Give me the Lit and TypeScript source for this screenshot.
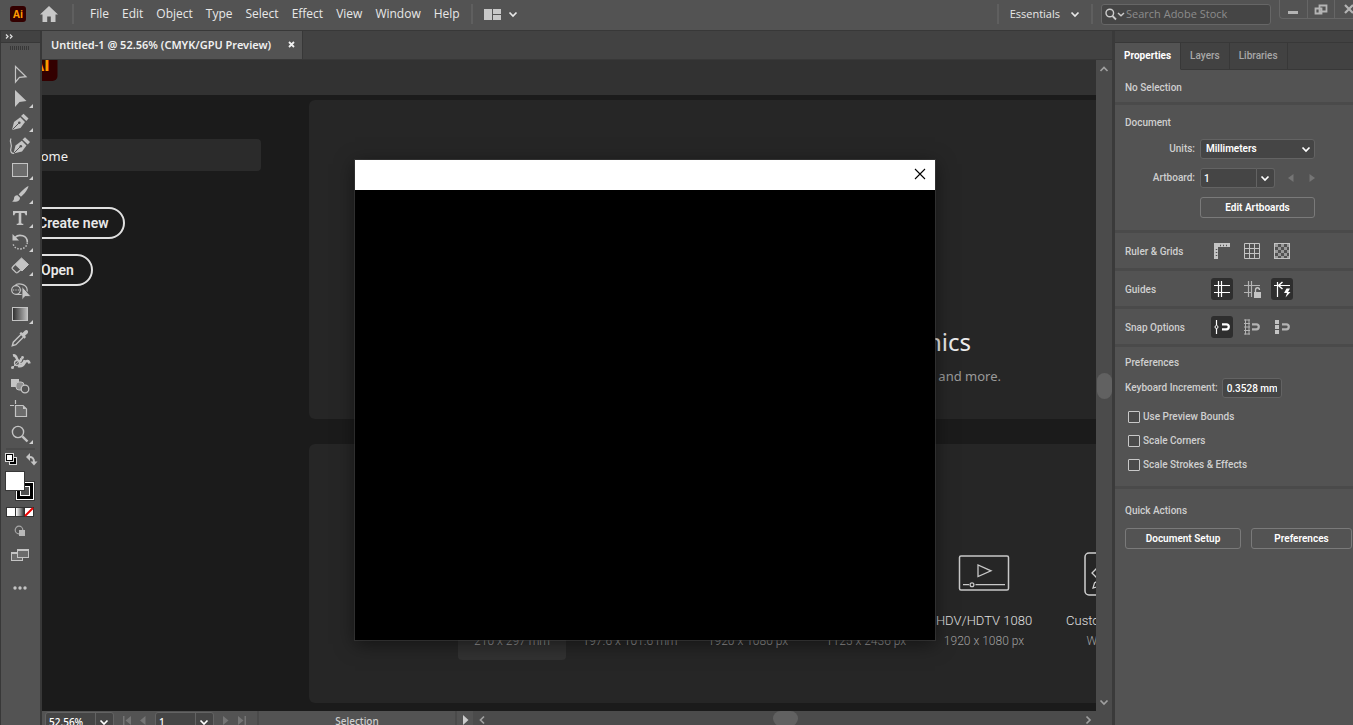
import { LitElement, html, css, svg, nothing } from "lit";
import { customElement } from "lit/decorators.js";
import { classMap } from "lit/directives/class-map.js";

const C = "#c4c4c4";
const BG = "#535353";

const chevron = (dir: "down" | "up" | "left" | "right" = "down") => {
  const d = {
    down: "M1.5 3.5 5 7l3.5-3.5",
    up: "M1.5 7 5 3.5 8.500 7",
    left: "M7 1.500 3.500 5 7 8.500",
    right: "M3.500 1.500 7 5 3.500 8.500",
  }[dir];
  return html`<svg class="chev" width="10" height="10" viewBox="0 0 10 10" aria-hidden="true">
    <path d=${d} fill="none" stroke="currentColor" stroke-width="1.7" />
  </svg>`;
};

const nib = svg`
  <path d="M4 20 6 12 12.300 7.300 17 12 12.500 18 4 20z" fill=${C} />
  <path d="M4.500 19.500 10.800 13.200" stroke=${BG} stroke-width="1" />
  <circle cx="11.300" cy="12.700" r="1.300" fill=${BG} />
  <path d="M13 6 15.500 3.800 20.500 8.600 18.300 11z" fill=${C} />`;

const tools: { name: string; more?: boolean; art: unknown }[] = [
  { name: "Selection", art: svg`<path d="M7.500 4.500V20l4-4.700 6.500-.6z" fill="none" stroke=${C} stroke-width="1.200" />` },
  { name: "Direct Selection", more: true, art: svg`<path d="M7 4v17l4.500-5 7-1z" fill=${C} />` },
  { name: "Pen", more: true, art: nib },
  {
    name: "Curvature",
    art: svg`<g transform="translate(1.500 -.5)">${nib}</g>
      <path d="M3 4.500C1 8 4.500 10 3 14c-1 3 0 5.500 3 5.500" fill="none" stroke=${C} stroke-width="1.200" />`,
  },
  { name: "Rectangle", more: true, art: svg`<rect x="4.500" y="5.500" width="15" height="13" fill="#6c6c6c" stroke=${C} />` },
  {
    name: "Paintbrush", more: true,
    art: svg`<path d="M20.500 4c-2.500.8-7.500 5.500-9.800 8.500l2.200 2.200C16 12.500 20 7.500 20.500 4z" fill=${C} />
      <path d="M9.800 13.400c-2.600-.3-3.600 1.200-3.800 3-.1 1.400-.8 2.400-2 3 3.800 1 8 .4 8-3.600z" fill=${C} />`,
  },
  { name: "Type", more: true, art: svg`<path d="M5 5h14v4.300h-1.500c-.2-1.700-.8-2.300-2.500-2.300h-1.700v9.500c0 1 .4 1.200 2 1.300V19H8.700v-1.200c1.600-.1 2-.3 2-1.300V7H9C7.300 7 6.700 7.600 6.500 9.300H5z" fill=${C} />` },
  {
    name: "Rotate", more: true,
    art: svg`<path d="M7 7.500c4-4 12.500-2 12.300 4.800" fill="none" stroke=${C} stroke-width="1.600" />
      <path d="M19.300 12.500c-.3 8-13.500 9-14.300.5" fill="none" stroke=${C} stroke-width="1.400" stroke-dasharray="1.500 1.500" />
      <path d="M4.500 4v6.500H11z" fill=${C} />`,
  },
  {
    name: "Eraser", more: true,
    art: svg`<path d="M13.500 4 20.500 10.500 14 17 7 10.300z" fill=${C} stroke=${C} />
      <path d="M7 10.500 4.300 13.500q-.6.8.2 1.600l3.500 3.400q.8.6 1.600 0l4-3.400" fill="none" stroke=${C} stroke-width="1.300" />`,
  },
  {
    name: "Shape Builder",
    art: svg`<circle cx="8" cy="12" r="4.300" fill="none" stroke=${C} stroke-width="1.200" />
      <path d="M7 7.500c2-2.500 10-2 11.800 2.500 .6 1.500.4 3 0 4M8 16.500h6" fill="none" stroke=${C} stroke-width="1.200" />
      <path d="M5 12h9" stroke=${C} stroke-width="1.200" stroke-dasharray="1.200 1.200" />
      <path d="M14 8.500V22l3-3.500h6z" fill=${C} stroke=${BG} stroke-width=".8" />`,
  },
  {
    name: "Gradient", more: true,
    art: svg`<defs><linearGradient id="g"><stop offset="0" stop-color="#2c2c2c" /><stop offset="1" stop-color="#c0c0c0" /></linearGradient></defs>
      <rect x="4.500" y="5.500" width="15" height="13" fill="url(#g)" stroke=${C} />`,
  },
  {
    name: "Eyedropper",
    art: svg`<path d="M13 8.500 5.300 16.200l-1 3.500 3.500-1L15.500 11" fill="none" stroke=${C} stroke-width="1.400" />
      <path d="M11.500 7.500 13 6l1.500 1L17 4.500c2-1.500 4 .5 2.700 2.700L17 9.700l1 1.300-1.500 1.700z" fill=${C} />`,
  },
  {
    name: "Puppet Warp",
    art: svg`<path d="M5 5.500c4-1 3 4 5.500 5.500 2.500 1 2-1 3-2.500" fill="none" stroke=${C} stroke-width="2.600" />
      <path d="M10 16c2.500.5 5 0 6.500-3s4.500-2.500 5 .5" fill="none" stroke=${C} stroke-width="2.600" />
      <path d="M11 13.500c3 1 5-1 5.500-3.500" fill="none" stroke=${C} stroke-width="2" />
      <circle cx="9" cy="13" r="2.500" fill=${BG} stroke=${C} stroke-width="1.300" />
      <path d="M4.500 17.500 15 7.500" stroke=${C} /><circle cx="4.500" cy="17.500" r="1.500" fill=${C} /><circle cx="14.500" cy="7.500" r="1.400" fill=${C} />`,
  },
  {
    name: "Blend",
    art: svg`<rect x="3" y="5" width="8" height="8" fill=${C} />
      <rect x="8" y="8" width="8" height="8" rx="3" fill="#8f8f8f" stroke=${C} />
      <circle cx="17" cy="15" r="3.800" fill=${BG} stroke=${C} stroke-width="1.300" />`,
  },
  {
    name: "Artboard",
    art: svg`<path d="M7.500 7.500H15l3.500 3.500v7.500h-11z" fill="#6c6c6c" stroke=${C} stroke-width="1.200" />
      <path d="M15 7.500 18.500 11H15z" fill=${C} /><path d="M2 7.500h4M7.500 2v4" stroke=${C} stroke-width="1.200" />`,
  },
  {
    name: "Zoom", more: true,
    art: svg`<circle cx="10" cy="10" r="5.600" fill="none" stroke=${C} stroke-width="1.400" />
      <path d="M14.300 14.300 19.500 19.500" stroke=${C} stroke-width="2.400" />`,
  },
];

@customElement("tool-rail")
class ToolRail extends LitElement {
  static styles = css`
    :host { display: flex; flex-direction: column; background: #535353; border-left: 1px solid #383838; border-right: 2px solid #383838; box-sizing: border-box; }
    .top { height: 11px; background: #424242; border-bottom: 1px solid #383838; padding-left: 4px; }
    .top svg, .grip { display: block; }
    .grip { height: 4px; margin: 3px 10px 12px 9px; background: repeating-linear-gradient(90deg, #383838 0 1px, #535353 1px 2px); }
    button { display: block; padding: 0; border: 0; background: none; }
    svg { display: block; }
    .tool { height: 24px; padding-left: 5px; }
    .rule { height: 2px; margin: 2px 5px 3px; background: #4a4a4a; }
    .swap { display: flex; justify-content: space-between; padding: 0 2px 0 4px; }
    .swatch { padding: 5px 0 0 4px; }
    .strip { padding: 5px 0 0 5px; }
    .mode { padding: 8px 0 0 9px; }
  `;
  render() {
    return html`
      <div class="top"><svg width="9" height="11" viewBox="0 0 9 11"><path d="M1 3.500 3 5.500 1 7.500M5 3.500l2 2-2 2" fill="none" stroke="#ddd" stroke-width="1.300" /></svg></div>
      <div class="grip"></div>
      ${tools.map((t) => html`
        <button class="tool" title=${t.name} aria-label=${t.name}>
          <svg width="28" height="24" viewBox="-2 0 28 24">${t.art}
            ${t.more ? svg`<path d="M25 18v4h-4z" fill="#d0d0d0" />` : nothing}
          </svg>
        </button>`)}
      <div class="rule"></div>
      <div class="swap">
        <button aria-label="Default Fill and Stroke"><svg width="13" height="13" viewBox="0 0 13 13">
          <rect x="4.500" y="4.500" width="7" height="7" fill="#000" stroke="#ddd" /><rect x="6.500" y="6.500" width="3" height="3" fill="#535353" stroke="#000" />
          <rect x="0" y="0" width="9" height="9" fill="#ddd" /><rect x="1.500" y="1.500" width="6" height="6" fill="#fff" stroke="#000" /></svg></button>
        <button aria-label="Swap Fill and Stroke"><svg width="13" height="13" viewBox="0 0 13 13">
          <path d="M4 4c3.500-.3 5 1.500 5 5" fill="none" stroke=${C} stroke-width="2" /><path d="M5 0v8L1 4zM5.500 8.500h7L9 12.500z" fill=${C} /></svg></button>
      </div>
      <button class="swatch" aria-label="Fill and Stroke"><svg width="31" height="31" viewBox="0 0 31 31">
        <rect x="10.500" y="10.500" width="19" height="19" fill="#fff" stroke="#383838" /><rect x="12" y="12" width="16" height="16" fill="#000" />
        <rect x="15.500" y="15.500" width="9" height="9" fill="#535353" stroke="#fff" />
        <rect x=".5" y=".5" width="19" height="19" fill="#fff" stroke="#383838" /></svg></button>
      <button class="strip" aria-label="Color, Gradient, None"><svg width="28" height="10" viewBox="0 0 28 10">
        <defs><linearGradient id="s"><stop offset="0" stop-color="#fff" /><stop offset="1" stop-color="#333" /></linearGradient></defs>
        <rect width="28" height="10" fill="#333" /><rect x="1" y="1" width="8" height="8" fill="#fff" /><rect x="10" y="1" width="8" height="8" fill="url(#s)" />
        <rect x="19" y="1" width="8" height="8" fill="#fff" /><path d="M19 9 27 1" stroke="#e00" stroke-width="2" /></svg></button>
      <button class="mode" aria-label="Drawing Mode"><svg width="20" height="12" viewBox="0 0 20 12">
        <circle cx="9" cy="5" r="3.800" fill="none" stroke="#a8a8a8" stroke-width="1.200" /><rect x="9" y="5" width="6" height="6" fill="#b8b8b8" /></svg></button>
      <button class="mode" aria-label="Screen Mode"><svg width="20" height="20" viewBox="0 0 20 20">
        <rect x="1.500" y="7.500" width="11" height="8" fill="#6c6c6c" stroke=${C} /><path d="M1.500 8.500h6" stroke=${C} />
        <rect x="7.500" y="4.500" width="11" height="8" fill="#6c6c6c" stroke=${C} /><path d="M7.500 5.500h11" stroke=${C} /></svg></button>
      <button class="mode" aria-label="Edit Toolbar"><svg width="20" height="28" viewBox="0 0 20 28">
        <g fill=${C}><circle cx="5" cy="15" r="1.700" /><circle cx="10" cy="15" r="1.700" /><circle cx="15" cy="15" r="1.700" /></g></svg></button>
    `;
  }
}

const presets = [
  ["A4", "210 x 297 mm"],
  ["Postcard", "197.6 x 101.6 mm"],
  ["Common", "1920 x 1080 px"],
  ["iPhone X", "1125 x 2436 px"],
  ["HDV/HDTV 1080", "1920 x 1080 px"],
  ["Custom Size", "W x H"],
];

@customElement("home-screen")
class HomeScreen extends LitElement {
  static styles = css`
    :host { display: block; overflow: hidden; background: #1b1b1b; font-family: "Noto Sans", sans-serif; color: #e6e6e6; }
    .sheet { display: flex; flex-direction: column; margin-left: -42px; height: 100%; }
    .brand { flex: none; height: 35px; background: #323232; padding-left: 26px; overflow: hidden; }
    .logo { width: 32px; height: 21px; display: block; }
    .cols { flex: 1; min-height: 0; display: grid; grid-template-columns: 309px 1fr; }
    nav { display: flex; flex-direction: column; align-items: flex-start; padding: 44px 48px 0 22px; }
    .home { align-self: stretch; height: 32px; display: flex; align-items: center; padding-left: 9px; border-radius: 4px; background: #2b2b2b; color: #f0f0f0; font-size: 13px; text-decoration: none; margin-bottom: 36px; box-sizing: border-box; padding-top: 2px; }
    .pill { height: 32px; min-width: 71px; box-sizing: border-box; border: 2px solid #e0e0e0; border-radius: 16px; background: none; color: #e8e8e8; font: 600 14px "Roboto", sans-serif; padding: 0 14px; margin-bottom: 15px; }
    main { display: grid; grid-template-rows: 319px 259px; row-gap: 25px; padding-top: 5px; min-width: 0; }
    .card { background: #262626; border-radius: 6px 0 0 6px; overflow: hidden; }
    .hero { display: flex; flex-direction: column; justify-content: flex-end; align-items: flex-end; padding: 0 95px 32px 0; }
    h1 { margin: 0 30px 7px 0; font-size: 24px; line-height: 32px; font-weight: 400; color: #ececec; }
    p { margin: 0; font-size: 13px; line-height: 22px; color: #9a9a9a; }
    .row { display: flex; gap: 10px; padding: 96px 0 0 149px; }
    .tile { flex: none; width: 108px; height: 120px; box-sizing: border-box; padding: 0; border: 0; border-radius: 4px; background: none; display: flex; flex-direction: column; align-items: center; color: #e0e0e0; font: 300 13px/20px "Roboto", sans-serif; white-space: nowrap; }
    .tile.on { background: #323232; }
    .art { height: 68px; margin-bottom: 3px; display: flex; align-items: center; }
    .dim { color: #a0a0a0; font-size: 12px; }
  `;
  art(i: number) {
    if (i === 4)
      return svg`<svg width="52" height="44" viewBox="0 0 52 44"><g fill="none" stroke="#c8c8c8" stroke-width="1.300">
        <rect x="1.500" y="4" width="49" height="34" rx="1.500" stroke-width="1.500" /><path d="M20 13v11.500l13-5.700z" />
        <path d="M5 32.700h6M17.500 32.700H47" /><circle cx="14" cy="32.700" r="1.900" /></g></svg>`;
    if (i === 5)
      return svg`<svg width="36" height="48" viewBox="0 0 36 48"><g fill="none" stroke="#d0d0d0" stroke-width="1.500">
        <rect x="1" y="3" width="34" height="42" rx="4" /><path d="M13 18 8 23l5 5M23 18l5 5-5 5" stroke-width="1.300" />
        <path d="M9 38l1.500-5 3-2 1.500 2-2.500 4z" stroke-width="1.200" /></g></svg>`;
    return svg`<svg width="34" height="44" viewBox="0 0 34 44"><rect x="1" y="1" width="32" height="42" rx="2" fill="none" stroke="#c8c8c8" stroke-width="1.500" /></svg>`;
  }
  render() {
    return html`<div class="sheet">
      <header class="brand">
        <svg class="logo" viewBox="0 0 32 21" aria-label="Ai"><rect y="-8" width="31.500" height="29" rx="5" fill="#330000" />
          <text x="5" y="11" font-family="Open Sans, sans-serif" font-weight="700" font-size="19" fill="#ff9a00">Ai</text></svg>
      </header>
      <div class="cols">
        <nav>
          <a class="home" href="#">Home</a>
          <button class="pill">Create new</button>
          <button class="pill">Open</button>
        </nav>
        <main>
          <section class="card hero"><h1>Create vector graphics</h1><p>Draw logos, icons, illustrations, and more.</p></section>
          <section class="card row">
            ${presets.map(([name, size], i) => html`<button class=${classMap({ tile: true, on: i === 0 })}>
              <span class="art">${this.art(i)}</span><span>${name}</span><span class="dim">${size}</span></button>`)}
          </section>
        </main>
      </div>
    </div>`;
  }
}

const ib = {
  ruler: svg`<path d="M3 3h16v4H7v12H3z" fill=${C} /><path d="M9 5.500h9M5.500 9v9" stroke="#535353" stroke-width="1.500" stroke-dasharray="1 2" />`,
  grid: svg`<path d="M3.500 3.500h15v15h-15zM8.500 3.500v15M13.500 3.500v15M3.500 8.500h15M3.500 13.500h15" fill="none" stroke=${C} />`,
  checker: svg`<defs><pattern id="c" width="6" height="6" x="4" y="4" patternUnits="userSpaceOnUse"><rect width="3" height="3" fill="#9a9a9a" /><rect x="3" y="3" width="3" height="3" fill="#9a9a9a" /></pattern></defs>
    <rect x="3.500" y="3.500" width="15" height="15" fill="url(#c)" stroke=${C} />`,
  guides: svg`<path d="M7.500 3v16M10.500 3v16M3 7.500h16M3 14.500h16" stroke="#fff" stroke-width="1.200" />`,
  lock: svg`<path d="M7.500 3v16M10.500 3v16M3 7.500h16M3 14.500h8" stroke="#b4b4b4" stroke-width="1.200" />
    <rect x="12" y="9" width="8" height="11" fill="#535353" /><rect x="13" y="14" width="7" height="6" fill=${C} /><path d="M14.500 14v-2c0-3 4-3 4 0" fill="none" stroke=${C} stroke-width="1.300" />`,
  smart: svg`<path d="M6.500 4v15M3 7.500h16" stroke="#fff" stroke-width="1.200" /><path d="M11.500 4 7.500 7.500l4 3.500" fill="none" stroke="#fff" stroke-width="1.500" />
    <path d="M15.500 10.500 13 15h3l-1.500 4.500 5-5.500h-2.500l2-3.500z" fill="#fff" />`,
  snap: (pre: unknown, col: string) => svg`${pre}<path d="M11 8.300h4.300a2.500 2.500 0 0 1 0 5H11" fill="none" stroke=${col} stroke-width="2.200" />`,
};

@customElement("properties-panel")
class PropertiesPanel extends LitElement {
  static styles = css`
    :host { display: flex; flex-direction: column; background: #535353; border-left: 3px solid #3a3a3a; box-sizing: border-box; overflow: hidden; color: #cfcfcf; font: 500 10px/16px "Roboto", sans-serif; }
    svg { display: block; }
    button, input, select { font: inherit; color: #fff; box-sizing: border-box; margin: 0; }
    .top { height: 11px; background: #424242; border-bottom: 1px solid #383838; }
    .tabs { display: flex; height: 27px; background: #424242; }
    .tab { border: 0; border-right: 1px solid #383838; border-bottom: 1px solid #383838; background: none; color: #a8a8a8; padding: 0 9px; }
    .tab.on { background: #535353; color: #fff; border-bottom-color: #535353; font-weight: 700; }
    .fill { flex: 1; border-bottom: 1px solid #383838; }
    section { border-bottom: 3px solid #4a4a4a; padding: 10px 0 9px 10px; }
    .sel { padding-bottom: 6px; }
    .last { border: 0; padding-top: 14px; }
    h2 { margin: 0; font: inherit; }
    .form { display: grid; grid-template-columns: 70px 115px; column-gap: 5px; row-gap: 9px; align-items: center; padding: 8px 0 4px; }
    .form > label { text-align: right; }
    .edit { grid-column: 2; }
    .btn { height: 21px; border: 1px solid #7a7a7a; border-radius: 3px; background: none; padding: 1px 0 0; font-weight: 600; }
    .pick { position: relative; display: block; }
    .pick select { display: block; width: 100%; height: 20px; appearance: none; background: #454545; border: 1px solid #636363; border-radius: 3px; padding: 0 5px; font-weight: 600; }
    .pick .chev { position: absolute; right: 4px; top: 5px; color: #fff; pointer-events: none; }
    .board { display: flex; align-items: center; }
    .field { height: 20px; border: 1px solid #636363; border-radius: 3px; background: #454545; padding: 0 4px; }
    .board .field { width: 57px; border-radius: 3px 0 0 3px; padding: 0 3px; }
    .drop { width: 18px; height: 20px; border: 1px solid #636363; border-left: 0; border-radius: 0 3px 3px 0; background: #454545; padding: 0 3px; }
    .step { border: 0; background: none; padding: 0; margin-left: 13px; }
    .step + .step { margin-left: 15px; }
    .opts { display: flex; align-items: center; padding: 7px 0 6px 10px; }
    .opts h2 { width: 86px; padding-top: 1px; }
    .ib { width: 22px; height: 22px; padding: 0; border: 0; border-radius: 3px; background: none; margin-right: 8px; }
    .ib.on { background: #2e2e2e; }
    .key { display: flex; align-items: center; gap: 4px; padding: 7px 0 7px; }
    .key .field { width: 60px; }
    .check { display: flex; align-items: center; gap: 3px; height: 24px; padding-left: 3px; }
    .check input { appearance: none; width: 12px; height: 12px; border: 1px solid #c8c8c8; border-radius: 1px; background: #4a4a4a; }
    .prefs { padding-top: 8px; }
    .acts { display: grid; grid-template-columns: 116px 101px; gap: 10px; padding-top: 9px; }
    .doc { padding-bottom: 8px; }
  `;
  render() {
    const btn = (name: string, art: unknown, on = false) => html`<button class=${classMap({ ib: true, on })} aria-label=${name} title=${name}>
      <svg width="22" height="22" viewBox="0 0 22 22">${art}</svg></button>`;
    return html`
      <div class="top"></div>
      <div class="tabs" role="tablist">
        <button class="tab on" role="tab" aria-selected="true">Properties</button>
        <button class="tab" role="tab">Layers</button>
        <button class="tab" role="tab">Libraries</button><span class="fill"></span>
      </div>
      <section class="sel"><h2>No Selection</h2></section>
      <section class="doc">
        <h2>Document</h2>
        <div class="form">
          <label for="units">Units:</label>
          <span class="pick"><select id="units"><option>Millimeters</option><option>Pixels</option></select>${chevron()}</span>
          <label for="board">Artboard:</label>
          <span class="board"><input id="board" class="field" value="1" /><button class="drop" aria-label="Artboards">${chevron()}</button>
            <button class="step" aria-label="Previous"><svg width="6" height="10"><path d="M5.500 1v8L0 5z" fill="#757575" /></svg></button>
            <button class="step" aria-label="Next"><svg width="6" height="10"><path d="M.5 1v8L6 5z" fill="#757575" /></svg></button></span>
          <button class="btn edit">Edit Artboards</button>
        </div>
      </section>
      <section class="opts"><h2>Ruler &amp; Grids</h2>${btn("Rulers", ib.ruler)}${btn("Grid", ib.grid)}${btn("Transparency Grid", ib.checker)}</section>
      <section class="opts"><h2>Guides</h2>${btn("Show Guides", ib.guides, true)}${btn("Lock Guides", ib.lock)}${btn("Smart Guides", ib.smart, true)}</section>
      <section class="opts"><h2>Snap Options</h2>
        ${btn("Snap to Point", ib.snap(svg`<path d="M5.500 4v5M5.500 12.500V18" stroke="#fff" stroke-width="1.200" /><circle cx="5.500" cy="11" r="1.500" fill="none" stroke="#fff" />`, "#fff"), true)}
        ${btn("Snap to Grid", ib.snap(svg`<path d="M4.500 3.500v15M8 3.500v15M3 4h6M3 7.500h6M3 11h6M3 14.500h6M3 18h6" stroke="#b4b4b4" />`, "#b4b4b4"))}
        ${btn("Snap to Pixel", ib.snap(svg`<path d="M4 4h4v4H4zM4 9h4v4H4zM4 14h4v4H4z" fill=${C} />`, "#b4b4b4"))}
      </section>
      <section class="prefs">
        <h2>Preferences</h2>
        <div class="key"><label for="inc">Keyboard Increment:</label><input id="inc" class="field" value="0.3528 mm" /></div>
        <label class="check"><input type="checkbox" />Use Preview Bounds</label>
        <label class="check"><input type="checkbox" />Scale Corners</label>
        <label class="check"><input type="checkbox" />Scale Strokes &amp; Effects</label>
      </section>
      <section class="last"><h2>Quick Actions</h2>
        <div class="acts"><button class="btn">Document Setup</button><button class="btn">Preferences</button></div></section>
    `;
  }
}

@customElement("app-root")
class AppRoot extends LitElement {
  static styles = css`
    :host { display: grid; grid-template-rows: 31px minmax(0, 1fr); height: 100vh; overflow: hidden; position: relative; background: #535353; color: #e8e8e8; font: 12px/16px "Open Sans", sans-serif; }
    svg { display: block; flex: none; }
    button, input, select { font: inherit; color: inherit; box-sizing: border-box; margin: 0; padding: 0; border: 0; background: none; }
    .bar { display: flex; align-items: center; border-bottom: 1px solid #383838; padding: 0 0 2px 10px; overflow: hidden; box-sizing: border-box; min-width: 0; }
    .home { margin-left: 14px; }
    .sep { flex: none; width: 2px; height: 20px; background: #5f5f5f; }
    .lead { margin: 0 16px 0 14px; }
    .menus { display: flex; gap: 13px; }
    .after { margin: 0 11px; }
    .layout { display: flex; align-items: center; gap: 7px; }
    .space { flex: 1; }
    .ess { display: flex; align-items: center; gap: 10px; margin: 0 11px; font-size: 11px; }
    .search { display: flex; align-items: center; width: 170px; height: 21px; margin-left: 8px; box-sizing: border-box; border: 1px solid #666; border-radius: 3px; background: #454545; padding-left: 3px; color: #ccc; }
    .search input { flex: 1; min-width: 0; font-size: 11px; padding-left: 1px; }
    .search input::placeholder { color: #8c8c8c; opacity: 1; }
    .win { display: flex; align-self: flex-start; margin: 0 -9px 0 8px; border: 1px solid #666; border-top: 0; border-radius: 0 0 0 4px; }
    .win button { width: 27px; height: 18px; border-left: 1px solid #666; }
    .win button:first-child { border-left: 0; }
    .body { display: grid; grid-template-columns: 42px minmax(0, 1fr) 241px; min-height: 0; }
    .doc { display: grid; grid-template: 29px minmax(0, 1fr) 14px / minmax(0, 1fr) 16px; min-height: 0; }
    .tabs { grid-column: 1 / -1; background: #424242; border-bottom: 1px solid #383838; display: flex; }
    .tab { display: flex; align-items: center; gap: 17px; background: #535353; border-right: 1px solid #383838; padding: 0 7px 1px 9px; font: 600 11px "Noto Sans", sans-serif; color: #f0f0f0; }
    .vbar { background: #4b4b4b; display: flex; flex-direction: column; align-items: center; justify-content: space-between; padding: 4px 0; color: #a0a0a0; }
    .thumb { width: 15px; height: 26px; border-radius: 8px; background: #616161; }
    .hbar .thumb { width: 25px; height: 15px; flex: none; }
    .status { grid-column: 1 / -1; display: flex; background: #535353; overflow: hidden; font: 500 10px/18px "Noto Sans", sans-serif; padding-left: 3px; }
    .combo { display: flex; flex: none; height: 19px; margin-top: 1px; border: 1px solid #636363; border-radius: 3px; box-sizing: border-box; background: #454545; color: #fff; }
    .combo input { width: 50px; padding-left: 3px; border-right: 1px solid #636363; }
    .combo button { width: 17px; padding-left: 3px; }
    .combo.small input { width: 40px; }
    .nav { flex: none; width: 41px; display: flex; gap: 9px; padding: 5px 0 0 9px; box-sizing: border-box; color: #757575; }
    .what { flex: none; width: 200px; border-left: 2px solid #4a4a4a; border-right: 2px solid #4a4a4a; margin-left: 2px; box-sizing: border-box; text-align: center; color: #cfcfcf; padding-top: 1px; }
    .go { flex: none; width: 16px; padding: 4px 0 0 6px; display: flex; align-items: flex-start; }
    .hbar { flex: 1; min-width: 0; display: flex; justify-content: space-between; padding: 0 19px 0 4px; background: #4b4b4b; color: #a0a0a0; }
    .hbar > .chev { margin-top: 4px; }
    .dialog { position: absolute; left: 355px; top: 160px; width: 580px; background: #000; box-shadow: 0 0 0 1px rgba(70, 70, 70, .45), 0 4px 18px rgba(0, 0, 0, .5); }
    .title { height: 30px; box-sizing: border-box; background: #fff; display: flex; justify-content: flex-end; align-items: center; color: #000; padding: 0 9px 2px 0; }
    .pane { height: 450px; }
  `;
  render() {
    const menus = ["File", "Edit", "Object", "Type", "Select", "Effect", "View", "Window", "Help"];
    return html`
      <header class="bar">
        <svg width="16" height="16" viewBox="0 0 16 16"><rect width="16" height="16" rx="3" fill="#330000" /><text x="3" y="12" font-family="Open Sans, sans-serif" font-size="10" font-weight="700" fill="#ff9a00">Ai</text></svg>
        <button class="home" aria-label="Home"><svg width="18" height="16" viewBox="0 0 18 16"><path d="M9 0 0 8.500h2.500V16h4.700v-5.500h3.600V16h4.700V8.500H18z" fill="#c8c8c8" /></svg></button>
        <span class="sep lead"></span>
        <nav class="menus">${menus.map((m) => html`<button>${m}</button>`)}</nav>
        <span class="sep after"></span>
        <button class="layout" aria-label="Arrange Documents"><svg width="17" height="11"><path d="M0 0h8v11H0zM9 0h8v5H9zM9 6h8v5H9z" fill="#c8c8c8" /></svg>${chevron()}</button>
        <span class="space"></span>
        <span class="sep"></span>
        <button class="ess">Essentials ${chevron()}</button>
        <span class="sep"></span>
        <label class="search"><svg width="12" height="13" viewBox="0 0 12 13"><circle cx="4.800" cy="5" r="3.800" fill="none" stroke="#ccc" stroke-width="1.400" /><path d="M7.500 8 11 11.500" stroke="#ccc" stroke-width="1.800" /></svg>
          <svg width="8" height="10" viewBox="0 0 8 10"><path d="M1 4 4 6.800 7 4" fill="none" stroke="#ccc" stroke-width="1.400" /></svg>
          <input type="search" aria-label="Search Adobe Stock" placeholder="Search Adobe Stock" /></label>
        <div class="win">
          <button aria-label="Minimize"><svg width="26" height="18"><path d="M8 11h10v3H8z" fill="#b4b4b4" /></svg></button>
          <button aria-label="Restore"><svg width="26" height="18"><path d="M11.500 5.500h7v6h-7zM7.500 8.500h6v5h-6z" fill="#535353" stroke="#b4b4b4" stroke-width="1.800" /></svg></button>
          <button aria-label="Close"><svg width="26" height="18"><path d="M10 5 18 13M18 5 10 13" stroke="#b4b4b4" stroke-width="2.200" /></svg></button>
        </div>
      </header>
      <div class="body">
        <tool-rail></tool-rail>
        <div class="doc">
          <div class="tabs"><div class="tab">Untitled-1 @ 52.56% (CMYK/GPU Preview)
            <button aria-label="Close tab"><svg width="7" height="7"><path d="M1 1 6 6M6 1 1 6" stroke="#f0f0f0" stroke-width="1.800" /></svg></button></div></div>
          <home-screen></home-screen>
          <div class="vbar">${chevron("up")}<span class="thumb"></span>${chevron("down")}</div>
          <footer class="status">
            <div class="combo"><input aria-label="Zoom level" value="52.56%" /><button aria-label="Zoom presets">${chevron()}</button></div>
            <div class="nav"><svg width="8" height="9"><path d="M0 0h1.500v9H0zM8 0v9L2.500 4.500z" fill="currentColor" /></svg><svg width="6" height="9"><path d="M5.500 0v9L0 4.500z" fill="currentColor" /></svg></div>
            <div class="combo small"><input aria-label="Artboard" value="1" /><button aria-label="Artboard list">${chevron()}</button></div>
            <div class="nav"><svg width="6" height="9"><path d="M0 0v9l5.500-4.500z" fill="currentColor" /></svg><svg width="8" height="9"><path d="M0 0v9l5.500-4.500zM6.500 0H8v9H6.500z" fill="currentColor" /></svg></div>
            <div class="what">Selection</div>
            <button class="go" aria-label="Status menu"><svg width="6" height="10"><path d="M0 0v10l5.500-5z" fill="#ccc" /></svg></button>
            <div class="hbar">${chevron("left")}<span class="thumb"></span>${chevron("right")}</div>
          </footer>
        </div>
        <properties-panel></properties-panel>
      </div>
      <div class="dialog" role="dialog" aria-label="Window">
        <div class="title"><button aria-label="Close"><svg width="12" height="12"><path d="M1 1 11 11M11 1 1 11" stroke="#000" stroke-width="1.100" /></svg></button></div>
        <div class="pane"></div>
      </div>
    `;
  }
}
